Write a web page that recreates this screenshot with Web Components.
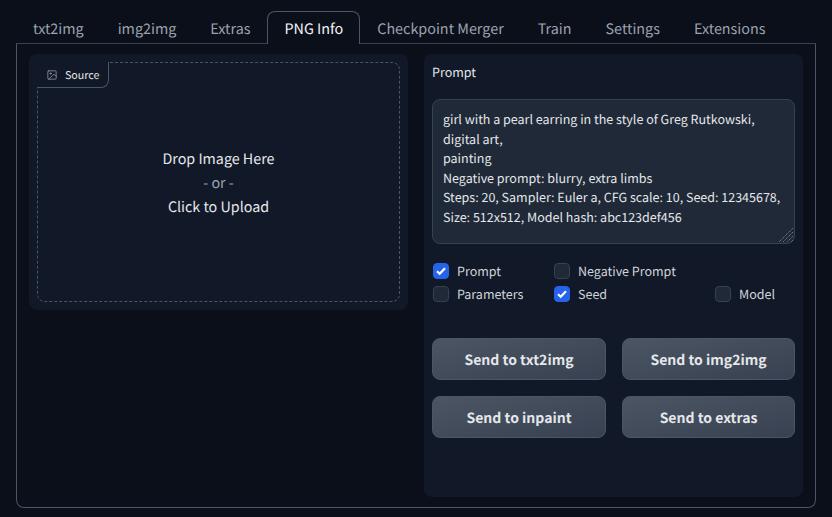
<!DOCTYPE html>
<html>
<head>
<meta charset="utf-8">
<style>
  html, body { margin: 0; height: 100%; background: #0b0f19; }
  body { padding: 11px 16px 0; box-sizing: border-box; width: 832px; height: 517px; overflow: hidden;
    font-family: "Noto Sans CJK SC", "Noto Sans", sans-serif; color: #f3f4f6; text-rendering: geometricPrecision; }
</style>
</head>
<body>
<tab-bar>
  <tab-item>txt2img</tab-item>
  <tab-item>img2img</tab-item>
  <tab-item>Extras</tab-item>
  <tab-item active>PNG Info</tab-item>
  <tab-item>Checkpoint Merger</tab-item>
  <tab-item>Train</tab-item>
  <tab-item>Settings</tab-item>
  <tab-item>Extensions</tab-item>
</tab-bar>
<tab-panel>
  <upload-box label="Source"></upload-box>
  <info-column>
    <prompt-box label="Prompt">girl with a pearl earring in the style of Greg Rutkowski, digital art,
painting
Negative prompt: blurry, extra limbs
Steps: 20, Sampler: Euler a, CFG scale: 10, Seed: 12345678, Size: 512x512, Model hash: abc123def456</prompt-box>
    <check-grid>
      <check-item checked>Prompt</check-item>
      <check-item>Negative Prompt</check-item>
      <span></span>
      <check-item>Parameters</check-item>
      <check-item checked>Seed</check-item>
      <check-item>Model</check-item>
    </check-grid>
    <button-grid>
      <send-button>Send to txt2img</send-button>
      <send-button>Send to img2img</send-button>
      <send-button>Send to inpaint</send-button>
      <send-button>Send to extras</send-button>
    </button-grid>
  </info-column>
</tab-panel>

<script>
// small helper, every element just sets its markup in an open shadow root
class Base extends HTMLElement {
  constructor(html) {
    super();
    this.attachShadow({ mode: 'open' });
    this.shadowRoot.innerHTML = html;
  }
}

class TabBar extends Base {
  constructor() {
    super(`<style>
      :host { display: flex; height: 33px; position: relative; z-index: 1; }
    </style><slot></slot>`);
  }
}

class TabItem extends Base {
  constructor() {
    super(`<style>
      :host { display: block; box-sizing: border-box; height: 33px; padding: 0 16px; font-size: 14.36px; line-height: 34px;
        color: #9ca3af; border: 1px solid transparent; border-bottom: 0; border-radius: 8px 8px 0 0; white-space: nowrap; }
      :host([active]) { color: #f3f4f6; border-color: #4b5563; background: #0b0f19; }
    </style><slot></slot>`);
  }
}

class TabPanel extends Base {
  constructor() {
    super(`<style>
      :host { display: grid; grid-template-columns: 379px 379px; gap: 16px; align-items: start; box-sizing: border-box;
        width: 800px; height: 465px; margin-top: -1px; padding: 10px 12px 9px;
        border: 1px solid #4b5563; border-top-color: #374151; border-radius: 0 0 8px 8px; }
    </style><slot></slot>`);
  }
}

class UploadBox extends Base {
  constructor() {
    super(`<style>
      :host { display: block; box-sizing: border-box; height: 256px; padding: 8px; background: #111827; border-radius: 8px; }
      .drop { position: relative; box-sizing: border-box; height: 240px; padding-top: 2px; border: 1px dashed #4b5563; border-radius: 8px;
        display: flex; flex-direction: column; align-items: center; justify-content: center; font-size: 14.3px; line-height: 24px; color: #e5e7eb; }
      .or { color: #9ca3af; }
      .label { position: absolute; left: -1px; top: -1px; display: flex; align-items: center; gap: 8px; box-sizing: border-box;
        height: 26px; padding: 1px 9px 0 10px; font-size: 10.7px; line-height: 16px; color: #e5e7eb; background: #111827;
        border: 1px solid #4b5563; border-top: 0; border-left: 0; border-radius: 0 0 8px 0; }
      .label span { position: relative; top: 1px; }
      svg { width: 10px; height: 10px; color: #9ca3af; }
    </style>
    <div class="drop">
      <div class="label">
        <svg viewBox="0 0 24 24" fill="none" stroke="currentColor" stroke-width="1.8" stroke-linecap="round" stroke-linejoin="round">
          <rect x="2" y="2" width="20" height="20" rx="2"></rect><circle cx="8.5" cy="8.5" r="1.5"></circle><path d="M22 15l-5-5L4 22"></path>
        </svg><span></span>
      </div>
      <div>Drop Image Here</div>
      <div class="or">- or -</div>
      <div>Click to Upload</div>
    </div>`);
  }
  connectedCallback() {
    this.shadowRoot.querySelector('span').textContent = this.getAttribute('label');
  }
}

class InfoColumn extends Base {
  constructor() {
    super(`<style>
      :host { display: block; box-sizing: border-box; height: 443px; padding: 8px; background: #111827; border-radius: 8px; }
    </style><slot></slot>`);
  }
}

class PromptBox extends Base {
  constructor() {
    super(`<style>
      :host { display: block; }
      .title { font-size: 12.5px; line-height: 20px; color: #e5e7eb; margin-bottom: 17px; }
      .area { position: relative; box-sizing: border-box; height: 145px; padding: 9px 10px 7px; background: #1f2937;
        border: 1px solid #374151; border-radius: 8px; font-size: 12.5px; line-height: 19.6px; color: #e5e7eb; white-space: pre-wrap; }
      svg { position: absolute; right: 0; bottom: 0; width: 17px; height: 17px; color: #6b7280; }
    </style>
    <div class="title"></div>
    <div class="area"><slot></slot><svg viewBox="0 0 17 17" fill="none" stroke="currentColor" stroke-width="1" stroke-dasharray="1.5 .6"><path d="M16 2L2 16M16 6L6 16M16 10L10 16M16 14l-2 2"></path></svg></div>`);
  }
  connectedCallback() {
    this.shadowRoot.querySelector('.title').textContent = this.getAttribute('label');
  }
}

class CheckGrid extends Base {
  constructor() {
    super(`<style>
      :host { display: grid; grid-template-columns: 121px 161px auto; grid-auto-rows: 23px; margin: 19px 0 0 1px; height: 46px; }
    </style><slot></slot>`);
  }
}

class CheckItem extends Base {
  constructor() {
    super(`<style>
      :host { display: flex; align-items: center; gap: 8px; font-size: 12.5px; line-height: 20px; color: #d1d5db; height: 16px; }
      .box { box-sizing: border-box; width: 16px; height: 16px; border-radius: 4px; background: #1f2937; border: 1px solid #374151; flex: none; }
      :host([checked]) .box { background: #2563eb; border-color: #2563eb; }
      svg { display: none; width: 14px; height: 14px; }
      :host([checked]) svg { display: block; }
    </style>
    <div class="box"><svg viewBox="0 0 14 14" fill="none" stroke="#fff" stroke-width="2.2"><path d="M3 7.2l2.7 2.6L11 4.2"></path></svg></div><slot></slot>`);
  }
}

class ButtonGrid extends Base {
  constructor() {
    super(`<style>
      :host { display: grid; grid-template-columns: 174px 173px; column-gap: 16px; row-gap: 16px; grid-auto-rows: 42px; margin-top: 29px; }
    </style><slot></slot>`);
  }
}

class SendButton extends Base {
  constructor() {
    super(`<style>
      :host { display: flex; align-items: center; justify-content: center; box-sizing: border-box; padding-top: 2px; border: 1px solid #4b5563;
        border-radius: 8px; background: linear-gradient(to bottom right, #4b5563, #374151);
        font-size: 14px; font-weight: 600; line-height: 24px; color: #e5e7eb; }
    </style><slot></slot>`);
  }
}

customElements.define('tab-bar', TabBar);
customElements.define('tab-item', TabItem);
customElements.define('tab-panel', TabPanel);
customElements.define('upload-box', UploadBox);
customElements.define('info-column', InfoColumn);
customElements.define('prompt-box', PromptBox);
customElements.define('check-grid', CheckGrid);
customElements.define('check-item', CheckItem);
customElements.define('button-grid', ButtonGrid);
customElements.define('send-button', SendButton);
</script>
</body>
</html>
